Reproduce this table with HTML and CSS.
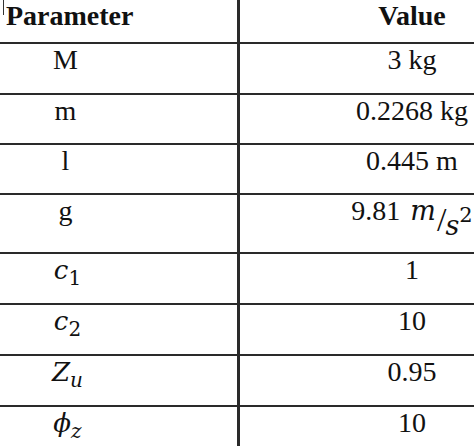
FILE: index.html
```html
<!DOCTYPE html>
<html>
<head>
<meta charset="utf-8">
<link rel="stylesheet" href="styles.css">
</head>
<body>
<div class="table">
  <div class="row head">
    <div class="c1"><span class="bar"></span><b>Parameter</b></div>
    <div class="c2"><b>Value</b></div>
  </div>
  <div class="row h51">
    <div class="c1">M</div>
    <div class="c2">3 kg</div>
  </div>
  <div class="row h50">
    <div class="c1">m</div>
    <div class="c2">0.2268 kg</div>
  </div>
  <div class="row h50">
    <div class="c1">l</div>
    <div class="c2">0.445 m</div>
  </div>
  <div class="row h59">
    <div class="c1">g</div>
    <div class="c2"><span>9.81&nbsp;</span><span class="unit"><i class="up">m</i><span class="sl">/</span><i class="dn">s</i><span class="sq">2</span></span></div>
  </div>
  <div class="row h51">
    <div class="c1"><span class="math"><i>c</i><sub>1</sub></span></div>
    <div class="c2">1</div>
  </div>
  <div class="row h51">
    <div class="c1"><span class="math"><i>c</i><sub>2</sub></span></div>
    <div class="c2">10</div>
  </div>
  <div class="row h51">
    <div class="c1"><span class="math"><i>Z</i><sub><i>u</i></sub></span></div>
    <div class="c2">0.95</div>
  </div>
  <div class="row last">
    <div class="c1"><span class="math"><i class="phi">ϕ</i><sub><i>z</i></sub></span></div>
    <div class="c2">10</div>
  </div>
</div>
</body>
</html>
```
FILE: styles.css
```css
html, body {
  margin: 0;
  padding: 0;
  background: #ffffff;
  overflow: hidden;
}
body {
  width: 474px;
  height: 446px;
  font-family: "Liberation Serif", "Times New Roman", serif;
  font-size: 28px;
  color: #111111;
}
.table {
  display: flex;
  flex-direction: column;
  width: 474px;
}
.row {
  display: grid;
  grid-template-columns: 240px minmax(0, 1fr);
  border-bottom: 2px solid #2a2a2a;
  box-sizing: border-box;
  line-height: 32px;
}
.head { height: 44px; }
.h51 { height: 51px; }
.h50 { height: 50px; }
.h59 { height: 59px; }
.last { height: 60px; border-bottom: none; }
.c1 {
  box-sizing: border-box;
  border-right: 3px solid #2a2a2a;
  padding-right: 106px;
  display: flex;
  justify-content: center;
  align-items: flex-start;
  white-space: nowrap;
}
.c2 {
  box-sizing: border-box;
  padding-left: 110px;
  display: flex;
  justify-content: center;
  align-items: flex-start;
  white-space: nowrap;
}
.head .c1 {
  justify-content: flex-start;
  padding-right: 0;
  padding-left: 3px;
  align-items: flex-end;
  padding-bottom: 18px;
}
.head .c2 {
  align-items: flex-end;
  padding-bottom: 18px;
}
.bar {
  align-self: flex-start;
  width: 1px;
  height: 23px;
  margin-top: -8px;
  background: #333333;
  margin-right: 2px;
}
.math {
  padding-left: 4px;
}
.math i {
  font-family: "DejaVu Serif", "Liberation Serif", serif;
  font-style: italic;
  font-size: 26px;
}
.math sub {
  font-size: 20px;
  vertical-align: -6px;
  line-height: 0;
  font-family: "DejaVu Serif", "Liberation Serif", serif;
}
.math sub i { font-size: 20px; }
.unit {
  padding-left: 3px;
}
.unit i {
  font-style: italic;
  font-family: "DejaVu Serif", "Liberation Serif", serif;
  font-size: 27px;
}
.up { vertical-align: 6px; }
.sl {
  font-size: 34px;
  vertical-align: -5px;
  margin: 0 -1px 0 1px;
}
.dn { vertical-align: -9px; }
.sq {
  font-size: 21px;
  font-family: "DejaVu Serif", serif;
  vertical-align: 4px;
}
```
